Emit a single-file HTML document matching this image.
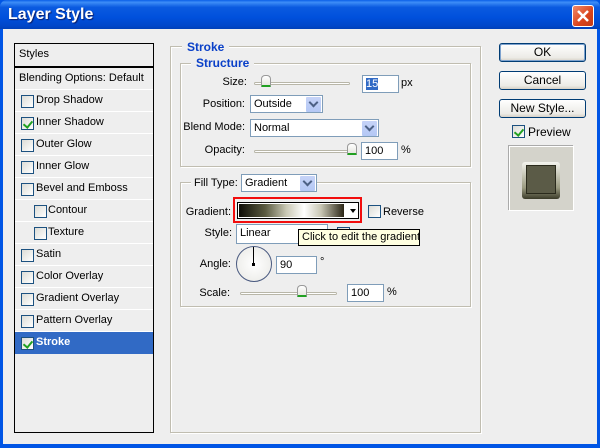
<!DOCTYPE html>
<html><head><style>
*{margin:0;padding:0;box-sizing:border-box}
body{width:600px;height:448px;overflow:hidden;background:#0055e5;font-family:"Liberation Sans",sans-serif;font-size:11px;color:#000;position:relative;white-space:nowrap}
.a{position:absolute}
#title{left:0;top:0;width:600px;height:29px;background:linear-gradient(#0a5fe8 0%,#3d8df7 8%,#0a5ae0 25%,#0050dc 60%,#0046c8 90%,#0040b8 100%);border-radius:7px 7px 0 0}
#body{left:3px;top:29px;width:594px;height:415px;background:#eeeeee}
.t{color:#fff;font:bold 16px "Liberation Sans",sans-serif;left:8px;top:6px;text-shadow:1px 1px 1px #0a1e6a}
#close{left:572px;top:5px;width:22px;height:22px;background:linear-gradient(135deg,#f08a6a,#d9431c 60%,#c23a16);border:1px solid #fff;border-radius:3px}
#list{left:14px;top:43px;width:140px;height:390px;border:1px solid #000;background:#eeeeee}
.row{position:absolute;left:0;width:138px;height:22px;border-bottom:1px solid #fff;line-height:21px;padding-left:21px;font-size:11px}
.cb{position:absolute;width:13px;height:13px;border:1px solid #1c5180;background:linear-gradient(135deg,#dcdcd6,#fff);top:5px}
.row .cb{left:6px}
.sel{background:#316ac5;color:#fff;font-weight:bold}
.gb{border:1px solid #c0bdb0;box-shadow:inset 1px 1px 0 #fff,1px 1px 0 #fff}
.lg{background:#eeeeee;color:#0a40c8;font-weight:bold;font-size:12px;padding:0 5px}
.r{position:absolute;text-align:right;width:80px;font-size:11px}
.in{background:#fff;border:1px solid #7f9db9;height:18px;line-height:16px;padding-left:3px}
.dd{position:absolute;right:1px;top:1px;width:15px;height:15px;background:linear-gradient(#c6d3f7,#b4c8f5);border-radius:1px}
.dd:after{content:"";position:absolute;left:4px;top:2px;width:5px;height:5px;border-right:2px solid #4d6185;border-bottom:2px solid #4d6185;transform:rotate(45deg)}
.trk{height:3px;background:#fff;border:1px solid #b8b6a8;border-radius:2px}
.th{width:10px;height:12px;background:linear-gradient(#fff,#e7e7e0);border:1px solid #999;border-bottom:2px solid #21a121;border-radius:4px 4px 1px 1px}
.btn{border:1px solid #003c74;border-radius:3px;background:linear-gradient(#fff,#ecebe6 80%,#d6d0c5);text-align:center;font-size:12px;line-height:16px;height:19px}
.chk:after{content:"";position:absolute;left:3px;top:1px;width:4px;height:7px;border-right:2px solid #21a121;border-bottom:2px solid #21a121;transform:rotate(40deg)}
</style></head><body>
<div id="title" class="a"></div>
<div class="a t">Layer Style</div>
<div id="close" class="a"><svg width="20" height="20" viewBox="0 0 20 20"><path d="M5 5L15 15M15 5L5 15" stroke="#fff" stroke-width="2.5"/></svg></div>
<div id="body" class="a"></div>

<div id="list" class="a">
 <div class="row" style="top:0;padding-left:4px;height:24px;border-bottom:2px solid #000">Styles</div>
 <div class="row" style="top:24px;padding-left:4px">Blending Options: Default</div>
 <div class="row" style="top:46px"><span class="cb"></span>Drop Shadow</div>
 <div class="row" style="top:68px"><span class="cb chk"></span>Inner Shadow</div>
 <div class="row" style="top:90px"><span class="cb"></span>Outer Glow</div>
 <div class="row" style="top:112px"><span class="cb"></span>Inner Glow</div>
 <div class="row" style="top:134px"><span class="cb"></span>Bevel and Emboss</div>
 <div class="row" style="top:156px;padding-left:33px"><span class="cb" style="left:19px"></span>Contour</div>
 <div class="row" style="top:178px;padding-left:33px"><span class="cb" style="left:19px"></span>Texture</div>
 <div class="row" style="top:200px"><span class="cb"></span>Satin</div>
 <div class="row" style="top:222px"><span class="cb"></span>Color Overlay</div>
 <div class="row" style="top:244px"><span class="cb"></span>Gradient Overlay</div>
 <div class="row" style="top:266px"><span class="cb"></span>Pattern Overlay</div>
 <div class="row sel" style="top:288px;border-bottom:0"><span class="cb chk"></span>Stroke</div>
</div>

<div class="a gb" style="left:170px;top:46px;width:311px;height:387px"></div>
<div class="a lg" style="left:182px;top:40px">Stroke</div>
<div class="a gb" style="left:180px;top:63px;width:291px;height:104px"></div>
<div class="a lg" style="left:191px;top:56px">Structure</div>

<div class="r" style="left:167px;top:76px">Size:</div>
<div class="a trk" style="left:254px;top:82px;width:96px"></div>
<div class="a th" style="left:261px;top:75px"></div>
<div class="a in" style="left:362px;top:75px;width:37px"><span style="background:#316ac5;color:#fff">15</span></div>
<div class="a" style="left:401px;top:77px">px</div>

<div class="r" style="left:165px;top:98px">Position:</div>
<div class="a in" style="left:250px;top:95px;width:73px">Outside<span class="dd"></span></div>
<div class="r" style="left:165px;top:121px">Blend Mode:</div>
<div class="a in" style="left:250px;top:119px;width:129px">Normal<span class="dd"></span></div>

<div class="r" style="left:165px;top:144px">Opacity:</div>
<div class="a trk" style="left:254px;top:150px;width:98px"></div>
<div class="a th" style="left:347px;top:143px"></div>
<div class="a in" style="left:361px;top:142px;width:37px">100</div>
<div class="a" style="left:401px;top:144px">%</div>

<div class="a gb" style="left:180px;top:182px;width:291px;height:125px"></div>
<div class="a" style="left:191px;top:177px;background:#eee;padding:0 3px 0 3px">Fill Type:</div>
<div class="a in" style="left:241px;top:174px;width:76px">Gradient<span class="dd"></span></div>

<div class="r" style="left:151px;top:206px">Gradient:</div>
<div class="a" style="left:233px;top:197px;width:129px;height:26px;border:2px solid #f20d0d"></div>
<div class="a" style="left:237px;top:202px;width:122px;height:17px;border:1px solid #000;background:#fff"></div>
<div class="a" style="left:239px;top:204px;width:105px;height:13px;background:linear-gradient(90deg,#0e0d06,#5a5a40 25%,#c9c8b4 45%,#fff 62%,#c8c6b4 78%,#2a2515)"></div>
<div class="a" style="left:350px;top:209px;width:0;height:0;border-left:3px solid transparent;border-right:3px solid transparent;border-top:4px solid #000"></div>
<div class="a cb" style="left:368px;top:205px"></div>
<div class="a" style="left:383px;top:206px">Reverse</div>

<div class="r" style="left:152px;top:227px">Style:</div>
<div class="a in" style="left:236px;top:224px;width:92px;height:20px">Linear</div>
<div class="a cb" style="left:337px;top:227px"></div>
<div class="a" style="left:298px;top:229px;width:122px;height:17px;background:#ffffe1;border:1px solid #000;font-size:11px;line-height:15px;padding-left:3px">Click to edit the gradient</div>

<div class="r" style="left:151px;top:258px">Angle:</div>
<div class="a" style="left:236px;top:246px;width:36px;height:36px;border-radius:50%;border:1px solid #4a5a80;background:radial-gradient(#fff,#e8e8e4)"></div>
<div class="a" style="left:253px;top:247px;width:1px;height:17px;background:#000"></div>
<div class="a" style="left:252px;top:263px;width:3px;height:3px;background:#000"></div>
<div class="a in" style="left:276px;top:256px;width:41px">90</div>
<div class="a" style="left:320px;top:256px">°</div>

<div class="r" style="left:150px;top:287px">Scale:</div>
<div class="a trk" style="left:240px;top:292px;width:97px"></div>
<div class="a th" style="left:297px;top:285px"></div>
<div class="a in" style="left:347px;top:284px;width:37px">100</div>
<div class="a" style="left:387px;top:286px">%</div>

<div class="a btn" style="left:499px;top:43px;width:87px;border-color:#003c74;box-shadow:inset 0 0 0 1px #7da2ce">OK</div>
<div class="a btn" style="left:499px;top:71px;width:87px">Cancel</div>
<div class="a btn" style="left:499px;top:99px;width:87px">New Style...</div>
<div class="a cb chk" style="left:512px;top:125px"></div>
<div class="a" style="left:528px;top:125px;font-size:12px">Preview</div>
<div class="a" style="left:509px;top:146px;width:65px;height:65px;background:#d4d3cb;border:1px solid #fff;box-shadow:-1px -1px 0 #aaa"></div>
<div class="a" style="left:522px;top:162px;width:38px;height:37px;border-radius:3px;background:linear-gradient(#f4f4ee,#9a9a80 70%,#3a3a28);"></div>
<div class="a" style="left:526px;top:165px;width:30px;height:29px;background:#5b5b47;border:1px solid #2a2a1c"></div>
</body></html>
